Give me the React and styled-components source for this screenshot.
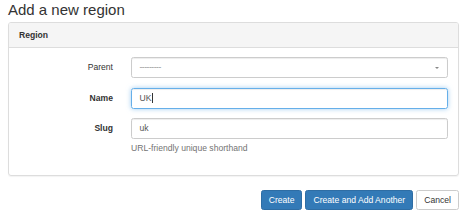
import React from "react";
import styled, { createGlobalStyle, css } from "styled-components";

const GlobalStyle = createGlobalStyle`
  html, body {
    margin: 0;
    padding: 0;
    background: #fff;
  }
  body {
    font-family: "Liberation Sans", Arial, Helvetica, sans-serif;
    font-size: 8.6px;
    color: #333;
  }
`;

const fields = [
  { label: "Parent", value: "---------", kind: "select" },
  { label: "Name", value: "UK", required: true, focused: true },
  {
    label: "Slug",
    value: "uk",
    required: true,
    help: "URL-friendly unique shorthand",
  },
];

const App = () => {
  return (
    <Page>
      <GlobalStyle />
      <Title>Add a new region</Title>
      <Panel>
        <PanelHeading>Region</PanelHeading>
        <PanelBody>
          {fields.map((f) => (
            <FormRow key={f.label}>
              <Label required={f.required}>{f.label}</Label>
              <div>
                {f.kind === "select" ? (
                  <Field>
                    <Placeholder>{f.value}</Placeholder>
                    <Caret />
                  </Field>
                ) : (
                  <Field focused={f.focused}>
                    {f.value}
                    {f.focused ? <TextCursor /> : null}
                  </Field>
                )}
                {f.help ? <Help>{f.help}</Help> : null}
              </div>
            </FormRow>
          ))}
        </PanelBody>
      </Panel>
      <Actions>
        <Button primary>Create</Button>
        <Button primary>Create and Add Another</Button>
        <Button>Cancel</Button>
      </Actions>
    </Page>
  );
};

const Page = styled.div`
  width: 451px;
  padding: 0 8px;
`;

const Title = styled.h3`
  margin: 0 0 2px;
  font-size: 15px;
  font-weight: 400;
  line-height: 20px;
  color: #333;
`;

const Panel = styled.div`
  border: 1px solid #ddd;
  border-radius: 3px;
  box-shadow: 0 1px 1px rgba(0, 0, 0, 0.05);
  margin-bottom: 14px;
`;

const PanelHeading = styled.div`
  background: #f5f5f5;
  border-bottom: 1px solid #ddd;
  border-radius: 2px 2px 0 0;
  height: 24px;
  line-height: 24px;
  padding: 0 10px;
  font-weight: 700;
`;

const PanelBody = styled.div`
  padding: 9px 10px 21px 9px;
  display: flex;
  flex-direction: column;
  gap: 9.7px;
`;

const FormRow = styled.div`
  display: grid;
  grid-template-columns: 95px 1fr;
  column-gap: 18px;
`;

const Label = styled.label`
  text-align: right;
  line-height: 21px;
  font-weight: ${(props) => (props.required ? 700 : 400)};
  color: #333;
`;

const Field = styled.div`
  position: relative;
  box-sizing: border-box;
  height: 21px;
  line-height: 19px;
  padding: 0 7.5px;
  border: 1px solid #ccc;
  border-radius: 2.5px;
  box-shadow: inset 0 1px 1px rgba(0, 0, 0, 0.075);
  color: #555;
  display: flex;
  align-items: center;
  ${(props) =>
    props.focused &&
    css`
      border-color: #66afe9;
      box-shadow: inset 0 1px 1px rgba(0, 0, 0, 0.075),
        0 0 5px rgba(102, 175, 233, 0.6);
    `}
`;

const Placeholder = styled.span`
  color: #999;
  letter-spacing: -0.5px;
`;

const Caret = styled.span`
  position: absolute;
  right: 8px;
  top: 9px;
  border-left: 2.5px solid transparent;
  border-right: 2.5px solid transparent;
  border-top: 2.5px solid #888;
`;

const TextCursor = styled.span`
  display: inline-block;
  width: 1px;
  height: 10px;
  background: #333;
  margin-left: 0.5px;
`;

const Help = styled.div`
  margin-top: 3px;
  line-height: 12px;
  color: #737373;
`;

const Actions = styled.div`
  display: flex;
  justify-content: flex-end;
  gap: 3px;
`;

const Button = styled.button`
  box-sizing: border-box;
  height: 20px;
  padding: 0 7px;
  font-family: inherit;
  font-size: 8.6px;
  border-radius: 2.5px;
  border: 1px solid ${(props) => (props.primary ? "#2e6da4" : "#ccc")};
  background: ${(props) => (props.primary ? "#337ab7" : "#fff")};
  color: ${(props) => (props.primary ? "#fff" : "#333")};
  cursor: pointer;
`;

export default App;
